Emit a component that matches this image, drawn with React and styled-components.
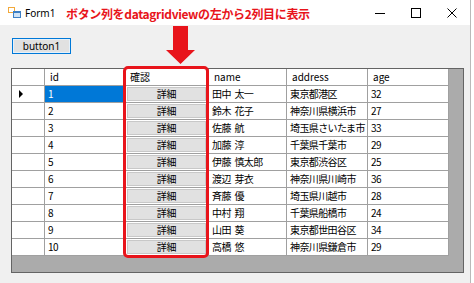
import React from 'react';
import styled, { createGlobalStyle } from 'styled-components';

const GlobalStyle = createGlobalStyle`
    html, body {
        margin: 0;
        padding: 0;
        background: #ffffff;
    }
    body {
        font-family: "Noto Sans CJK JP", "Noto Sans", sans-serif;
    }
`;

const rows = [
    [1, '田中 太一', '東京都港区', 32],
    [2, '鈴木 花子', '神奈川県横浜市', 27],
    [3, '佐藤 航', '埼玉県さいたま市', 33],
    [4, '加藤 淳', '千葉県千葉市', 29],
    [5, '伊藤 慎太郎', '東京都渋谷区', 25],
    [6, '渡辺 芽衣', '神奈川県川崎市', 36],
    [7, '斉藤 優', '埼玉県川越市', 28],
    [8, '中村 翔', '千葉県船橋市', 24],
    [9, '山田 葵', '東京都世田谷区', 34],
    [10, '高橋 悠', '神奈川県鎌倉市', 29],
];

const Page = styled.div`
    position: relative;
    width: 474px;
    height: 283px;
    overflow: hidden;
`;

const Window = styled.div`
    width: 470px;
    height: 283px;
    display: flex;
    flex-direction: column;
    border-right: 1px solid #b9b9b9;
`;

const TitleBar = styled.div`
    height: 25px;
    background: #ffffff;
    display: flex;
    align-items: center;
    padding-left: 8px;
`;

const AppIcon = styled.svg`
    width: 13px;
    height: 11px;
    margin-right: 4px;
`;

const TitleText = styled.span`
    font-family: "Noto Sans", sans-serif;
    font-size: 10px;
    color: #000;
`;

const Controls = styled.div`
    margin-left: auto;
    display: flex;
    align-items: center;
`;

const Control = styled.div`
    width: 36px;
    height: 25px;
    display: flex;
    align-items: center;
    justify-content: center;
`;

const Client = styled.div`
    flex: 1;
    background: #f0f0f0;
    display: flex;
    flex-direction: column;
    align-items: flex-start;
`;

const FormButton = styled.button`
    margin: 13px 0 0 12px;
    width: 59px;
    height: 16px;
    padding: 0;
    background: #e1e1e1;
    border: 1px solid #0078d7;
    box-shadow: inset 0 0 0 1px #e5f1fb;
    font-family: "Noto Sans", sans-serif;
    font-size: 10px;
    color: #000;
    line-height: 12px;
`;

const Grid = styled.div`
    margin: 14px 0 0 11px;
    width: 451px;
    height: 203px;
    border: 1px solid #646464;
    background: #ababab;
    display: grid;
    grid-template-columns: 33px 80px 84px 78px 81px 81px;
    grid-template-rows: 17px repeat(10, 17px);
    align-content: start;
`;

const Cell = styled.div`
    background: ${(p) => (p.selected ? '#0078d7' : '#ffffff')};
    color: ${(p) => (p.selected ? '#ffffff' : '#000000')};
    border-right: 1px solid #a0a0a0;
    border-bottom: 1px solid #a0a0a0;
    font-size: 10px;
    letter-spacing: ${(p) => (p.header ? '0' : '-0.6px')};
    word-spacing: 2px;
    line-height: 16px;
    padding-left: ${(p) => (p.header ? '5px' : '3px')};
    white-space: pre;
    overflow: hidden;
    display: flex;
    align-items: center;
`;

const RowMarker = styled.span`
    width: 0;
    height: 0;
    margin-left: 4px;
    border-top: 4px solid transparent;
    border-bottom: 4px solid transparent;
    border-left: 4px solid #000;
`;

const ButtonCell = styled.div`
    background: #ffffff;
    border-right: 1px solid #a0a0a0;
    border-bottom: 1px solid #a0a0a0;
    padding: 1px 2px;
    display: flex;
`;

const DetailButton = styled.div`
    flex: 1;
    background: #e1e1e1;
    border: 1px solid #c8c8c8;
    font-size: 10px;
    letter-spacing: -0.3px;
    line-height: 12px;
    display: flex;
    align-items: center;
    justify-content: center;
    color: #000;
`;

const Callout = styled.div`
    position: absolute;
    left: 66px;
    top: 5px;
    font-family: "Noto Sans CJK JP", sans-serif;
    font-weight: 700;
    font-size: 12px;
    letter-spacing: -0.35px;
    color: #e8141b;
    white-space: nowrap;
`;

const Arrow = styled.svg`
    position: absolute;
    left: 166px;
    top: 26px;
    width: 29px;
    height: 38px;
`;

const Highlight = styled.div`
    position: absolute;
    left: 123px;
    top: 66px;
    width: 80px;
    height: 186px;
    border: 3px solid #e8141b;
    border-radius: 5px;
`;

export default function App() {
    return (
        <Page>
            <GlobalStyle />
            <Window>
                <TitleBar>
                    <AppIcon viewBox="0 0 13 11">
                        <rect x="0" y="0" width="7" height="6" fill="#f2a93b" />
                        <rect x="1" y="1" width="5" height="4" fill="#fff" />
                        <rect x="5" y="4" width="8" height="7" fill="#3d7fc4" />
                        <rect x="6" y="6" width="6" height="4" fill="#cfe3f7" />
                    </AppIcon>
                    <TitleText>Form1</TitleText>
                    <Controls>
                        <Control>
                            <svg width="10" height="10" viewBox="0 0 10 10">
                                <line x1="0" y1="5.5" x2="10" y2="5.5" stroke="#000" strokeWidth="1" />
                            </svg>
                        </Control>
                        <Control>
                            <svg width="10" height="10" viewBox="0 0 10 10">
                                <rect x="0.5" y="0.5" width="9" height="9" fill="none" stroke="#000" strokeWidth="1" />
                            </svg>
                        </Control>
                        <Control>
                            <svg width="10" height="10" viewBox="0 0 10 10">
                                <path d="M0.5 0.5 L9.5 9.5 M9.5 0.5 L0.5 9.5" stroke="#000" strokeWidth="1" />
                            </svg>
                        </Control>
                    </Controls>
                </TitleBar>
                <Client>
                    <FormButton>button1</FormButton>
                    <Grid>
                        <Cell header />
                        <Cell header>id</Cell>
                        <Cell header>確認</Cell>
                        <Cell header>name</Cell>
                        <Cell header>address</Cell>
                        <Cell header>age</Cell>
                        {rows.map(([id, name, address, age], i) => (
                            <React.Fragment key={id}>
                                <Cell>{i === 0 && <RowMarker />}</Cell>
                                <Cell selected={i === 0}>{id}</Cell>
                                <ButtonCell>
                                    <DetailButton>詳細</DetailButton>
                                </ButtonCell>
                                <Cell>{name}</Cell>
                                <Cell>{address}</Cell>
                                <Cell>{age}</Cell>
                            </React.Fragment>
                        ))}
                    </Grid>
                </Client>
            </Window>
            <Callout>ボタン列をdatagridviewの左から2列目に表示</Callout>
            <Arrow viewBox="0 0 29 38">
                <polygon points="7,0 22,0 22,24 29,24 14.5,38 0,24 7,24" fill="#e8141b" />
            </Arrow>
            <Highlight />
        </Page>
    );
}
